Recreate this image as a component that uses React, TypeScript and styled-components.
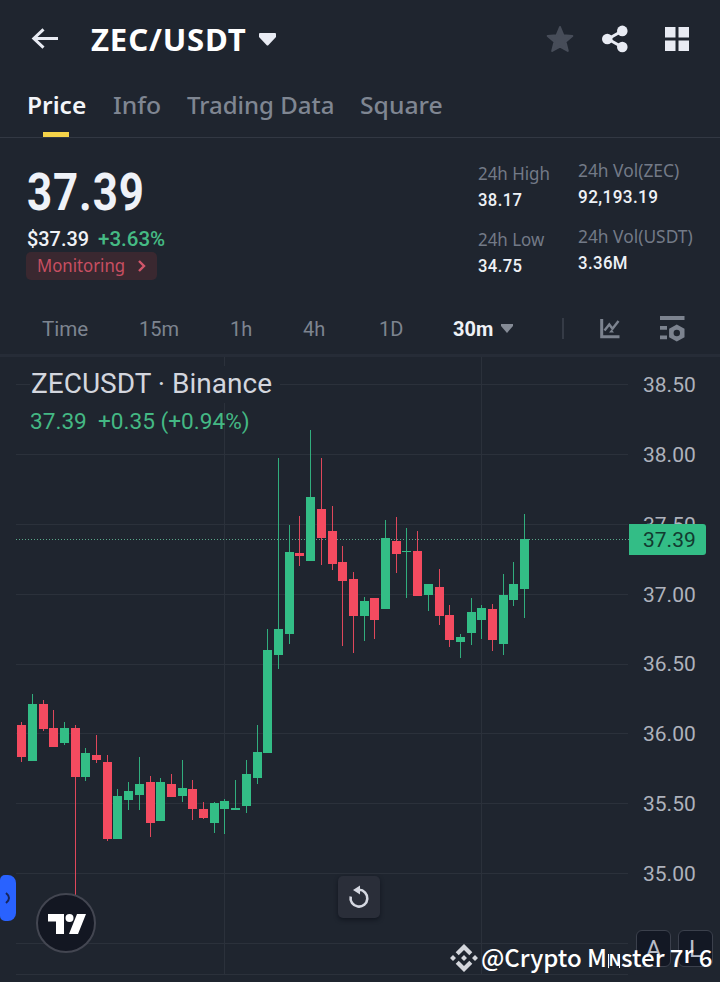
import React from "react";
import styled, { createGlobalStyle } from "styled-components";

const Global = createGlobalStyle`
  *, *::before, *::after { box-sizing: border-box; }
  html, body { margin: 0; background: #1f252f; }
  body { font-family: Roboto, "Noto Sans", sans-serif; color: #eaecef; overflow: hidden; }
`;

const UP = "#33bd86";
const DOWN = "#f44b60";

const Screen = styled.main`
  width: 720px;
  height: 982px;
  overflow: hidden;
  display: flex;
  flex-direction: column;
  background: #1f252f;
`;

const Squeeze = styled.span<{ $x: number; $gap?: number }>`
  display: inline-block;
  white-space: pre;
  letter-spacing: ${(p) => p.$gap ?? 0}px;
  transform: scaleX(${(p) => p.$x});
  transform-origin: left center;
`;

const Header = styled.header`
  height: 78px;
  flex: none;
  display: flex;
  align-items: center;
  padding: 0 31px 1px;

  svg { display: block; flex: none; }
`;

const PairButton = styled.button`
  all: unset;
  display: flex;
  align-items: center;
  width: 187px;
  height: 40px;
  margin-left: 32px;
  padding-top: 2px;
`;

const PairName = styled.span`
  width: 168px;
  font: 700 30px/40px "Noto Sans", sans-serif;
  color: #fff;
`;

const Actions = styled.div`
  margin-left: auto;
  display: flex;
  align-items: center;
`;

const IconSlot = styled.span<{ $w: number }>`
  width: ${(p) => p.$w}px;
  display: block;
`;

const Tabs = styled.nav`
  height: 60px;
  flex: none;
  display: flex;
  padding-left: 27px;
  border-bottom: 1px solid #323843;
`;

const Tab = styled.a<{ $w: number; $active?: boolean }>`
  width: ${(p) => p.$w}px;
  height: 59px;
  display: flex;
  flex-direction: column;
  justify-content: space-between;
  font: ${(p) => (p.$active ? 600 : 500)} 24px/54px "Noto Sans", sans-serif;
  color: ${(p) => (p.$active ? "#f3f5f9" : "#7f8692")};
  white-space: nowrap;
`;

const TabMark = styled.i`
  width: 26px;
  height: 5px;
  flex: none;
  margin-left: 16px;
  background: #f5d349;
`;

const Ticker = styled.section`
  height: 167px;
  flex: none;
  display: flex;
  padding: 19px 0 0 27px;
`;

const PriceBlock = styled.div`
  width: 451px;
  padding-top: 8px;
`;

const BigPrice = styled.div`
  height: 62px;
  font: 700 51px/56px Roboto, sans-serif;
  color: #eff2f8;
`;

const SubPrice = styled.div`
  display: flex;
  height: 25px;
  font: 500 20.5px/25px Roboto, sans-serif;
  color: #f0f2f6;
`;

const Usd = styled.span`
  width: 71px;
`;

const Change = styled.span`
  color: #45bb84;
`;

const Warning = styled.button`
  all: unset;
  display: flex;
  align-items: center;
  box-sizing: border-box;
  width: 131px;
  height: 28px;
  margin-left: -1px;
  padding-left: 11px;
  border-radius: 5px;
  background: #3a2830;
  color: #c84f62;
  font: 400 18px/26px "Noto Sans", sans-serif;
`;

const WarningText = styled.span`
  width: 101px;
  height: 28px;
`;

const Stats = styled.div<{ $w: number; $drop: number }>`
  width: ${(p) => p.$w}px;
  padding-top: ${(p) => p.$drop}px;
`;

const Stat = styled.div`
  height: 66px;
`;

const StatLabel = styled.div`
  height: 28px;
  font: 400 18px/26px "Noto Sans", sans-serif;
  color: #737a87;
`;

const StatValue = styled.div`
  font: 500 17.5px/24px Roboto, sans-serif;
  color: #eef1f6;
`;

const Intervals = styled.nav`
  height: 49px;
  flex: none;
  display: flex;
  align-items: center;
  padding: 0 0 2px 42px;

  svg { display: block; flex: none; }
`;

const Interval = styled.a<{ $w: number; $active?: boolean }>`
  width: ${(p) => p.$w}px;
  font: ${(p) => (p.$active ? 700 : 400)} 20px/28px Roboto, "Noto Sans", sans-serif;
  color: ${(p) => (p.$active ? "#eef1f6" : "#7d8490")};
`;

const Divider = styled.i`
  width: 2px;
  height: 21px;
  margin: 0 36px 0 49px;
  background: #353b46;
`;

const ChartArea = styled.section`
  position: relative;
  height: 628px;
  flex: none;
  display: grid;
  grid-template-columns: 629px 91px;
  border-top: 3px solid #262c37;

  > svg { display: block; }
`;

const Axis = styled.div`
  display: flex;
  flex-direction: column;
  padding: 15px 0 0 14px;
  font: 400 21px/26px Roboto, sans-serif;
  color: #aeb2bc;
`;

const Tick = styled.span`
  height: 69.86px;
  flex: none;
`;

const LastPrice = styled.div`
  position: absolute;
  left: 629px;
  top: 167px;
  width: 77px;
  height: 31px;
  padding-left: 14px;
  border-radius: 0 3px 3px 0;
  background: ${UP};
  color: #123a30;
  font: 400 21px/32px Roboto, sans-serif;
`;

const Legend = styled.div`
  position: absolute;
  left: 30px;
  top: 9px;
`;

const LegendTitle = styled.div`
  height: 37px;
  padding: 0 8px 0 1px;
  background: #1f252f;
  font: 400 28px/36px Roboto, sans-serif;
  color: #d3d6de;
`;

const LegendValues = styled.div`
  font: 400 22.500px/36px Roboto, sans-serif;
  color: #44b884;
`;

const ResetButton = styled.button`
  all: unset;
  position: absolute;
  left: 338px;
  top: 519px;
  width: 42px;
  height: 42px;
  display: grid;
  place-items: center;
  border-radius: 5px;
  background: #2a2e39;
  box-shadow: 0 2px 4px rgba(8, 11, 20, 0.55);
`;

const Drawer = styled.button`
  all: unset;
  position: absolute;
  left: 0;
  top: 518px;
  width: 16px;
  height: 46px;
  display: grid;
  place-items: center;
  border-radius: 5px 8px 8px 5px;
  background: #2962ff;
`;

const Badge = styled.div`
  position: absolute;
  left: 36px;
  top: 536px;
  width: 60px;
  height: 60px;
  display: grid;
  place-items: center;
  padding: 2px 0 0 1px;
  border: 2px solid #434651;
  border-radius: 50%;
  background: #131722;
`;

const ScaleButtons = styled.div`
  position: absolute;
  left: 636px;
  top: 573px;
  display: flex;
  gap: 7px;
`;

const ScaleButton = styled.button`
  all: unset;
  box-sizing: border-box;
  width: 35px;
  height: 37px;
  border: 1px solid #3b404c;
  border-radius: 6px;
  background: #131824;
  color: #b9bdc9;
  font: 400 24px/36px Roboto, sans-serif;
  text-align: center;
`;

const Watermark = styled.div`
  position: absolute;
  left: 450px;
  top: 583px;
  height: 36px;
  display: flex;
  align-items: center;
  color: #fff;
  white-space: pre;
  font: 500 24px/36px "Noto Sans CJK SC", sans-serif;
`;

const Handle = styled.span`
  height: 36px;
  margin: -2px 0 0 3px;
`;

const BoxedLetter = styled.span`
  position: relative;
  top: -1px;
  display: inline-block;
  width: 12px;
  height: 14px;
  margin: 0 1px;
  border: solid #fff;
  border-width: 0 1px;
  font: 700 16px/14px "Liberation Sans", sans-serif;
  text-align: center;
`;

const Raised = styled.span`
  position: relative;
  top: -4px;
`;

type Candle = [x: number, open: number, close: number, high: number, low: number, up: 0 | 1];

const candles: Candle[] = [
  [21, 725, 757, 722, 762, 0],
  [32, 704, 761, 694, 761, 1],
  [43, 704, 729, 700, 731, 0],
  [53, 728, 747, 710, 747, 0],
  [64, 728, 743, 722, 745, 1],
  [75, 728, 777, 725, 896, 0],
  [85, 753, 777, 748, 781, 1],
  [96, 755, 760, 735, 763, 0],
  [107, 762, 839, 755, 841, 0],
  [117, 796, 839, 789, 839, 1],
  [128, 791, 800, 782, 810, 1],
  [139, 784, 795, 757, 810, 1],
  [150, 782, 823, 776, 837, 0],
  [160, 782, 821, 778, 821, 1],
  [171, 784, 797, 774, 797, 0],
  [182, 788, 796, 760, 802, 1],
  [192, 789, 809, 780, 820, 0],
  [203, 809, 818, 802, 819, 0],
  [214, 803, 823, 802, 833, 1],
  [224, 801, 809, 799, 834, 1],
  [235, 808, 810, 780, 810, 1],
  [246, 774, 806, 760, 813, 1],
  [257, 752, 778, 725, 784, 1],
  [267, 650, 753, 629, 753, 1],
  [278, 629, 655, 458, 669, 1],
  [289, 552, 634, 525, 644, 1],
  [299, 553, 556, 516, 566, 0],
  [310, 497, 561, 430, 561, 1],
  [321, 509, 538, 458, 565, 0],
  [332, 531, 564, 506, 570, 0],
  [342, 562, 581, 546, 646, 0],
  [353, 579, 616, 572, 653, 0],
  [364, 601, 616, 597, 641, 1],
  [374, 598, 620, 598, 639, 0],
  [385, 538, 609, 520, 609, 1],
  [396, 541, 554, 517, 573, 0],
  [406, 551, 552, 528, 598, 1],
  [417, 551, 596, 531, 596, 0],
  [428, 584, 595, 584, 611, 1],
  [439, 587, 616, 569, 625, 0],
  [449, 615, 640, 605, 647, 0],
  [460, 637, 642, 634, 658, 1],
  [471, 612, 633, 598, 645, 1],
  [481, 608, 620, 605, 639, 1],
  [492, 609, 640, 604, 651, 0],
  [503, 595, 644, 574, 655, 1],
  [513, 584, 600, 562, 606, 1],
  [524, 539, 589, 514, 618, 1],
];

const rows = [384, 454, 524, 594, 664, 733, 803, 873, 943, 974];
const ticks = ["38.50", "38.00", "37.50", "37.00", "36.50", "36.00", "35.50", "35.00"];

const Candles = () => (
  <svg width="629" height="625" viewBox="0 357 629 625" shapeRendering="crispEdges">
    {rows.map((y) => (
      <rect key={y} x={16} y={y} width={612} height={1} fill="#2b313b" />
    ))}
    <rect x={224} y={357} width={1} height={618} fill="#2b313b" />
    <rect x={481} y={357} width={1} height={618} fill="#2b313b" />
    <path d="M16 539.5H629" stroke="#5aa88b" strokeDasharray="1 2" />
    {candles.map(([x, top, bottom, high, low, up]) => (
      <g key={x} fill={up ? UP : DOWN}>
        <rect x={x} y={high} width={1} height={low - high} opacity={0.9} />
        <rect x={x - 4} y={top} width={9} height={bottom - top} />
      </g>
    ))}
  </svg>
);

const BackIcon = () => (
  <svg width="28" height="22" viewBox="0 0 28 22" fill="none" stroke="#e8ebf3" strokeWidth="3">
    <path d="M27 10.500H2.500M12.500 1.300L2.800 10.500l9.700 9.200" />
  </svg>
);

const StarIcon = () => (
  <svg width="28" height="28" viewBox="0 0 28 28" fill="#474d59" stroke="#474d59" strokeWidth="2" strokeLinejoin="round">
    <path d="M14 2l3.300 8.200 9 .7-6.800 5.800 2.300 9.200-7.800-4.300-7.800 4.300 2.300-9.200L1.700 10.900l9-.7z" />
  </svg>
);

const ShareIcon = () => (
  <svg width="27" height="28" viewBox="0 0 27 28" fill="#e8ebf3">
    <path d="M21 6L7 14l14 8" fill="none" stroke="#e8ebf3" strokeWidth="3" />
    <circle cx="21.300" cy="5.900" r="5.300" />
    <circle cx="6.300" cy="14" r="5.300" />
    <circle cx="21.300" cy="22" r="5.300" />
  </svg>
);

const GridIcon = () => (
  <svg width="24" height="24" viewBox="0 0 24 24" fill="#e8ebf3">
    <path d="M0 0h10.500v10.500H0zM13.500 0H24v10.500H13.500zM0 13.500h10.500V24H0zM13.500 13.500H24V24H13.500z" />
  </svg>
);

const TrendIcon = () => (
  <svg width="20" height="20" viewBox="0 0 20 20" fill="none" stroke="#7c838f">
    <path d="M1.700 0v17.800H19.500" strokeWidth="3" />
    <path d="M4.500 11.500l4.800-6 3.200 4.200L18.500 2" strokeWidth="2.400" />
    <path d="M9 13.500l2.500-3 2.500 3z" fill="#7c838f" stroke="none" />
  </svg>
);

const SettingsIcon = () => (
  <svg width="25" height="26" viewBox="0 0 25 26" fill="#7c838f">
    <path d="M0 0h24.500v4H0zM0 10h7v3.800H0zM0 19.500h7v3.800H0z" />
    <path fillRule="evenodd" d="M16.800 8.500l7.700 4.300v8.400l-7.700 4.300-7.700-4.300v-8.400zM16.800 13.800a3.200 3.200 0 1 0 0 6.400 3.200 3.200 0 0 0 0-6.400z" />
  </svg>
);

const ResetIcon = () => (
  <svg width="22" height="24" viewBox="0 0 22 24">
    <path d="M2.700 11.500A8.400 8.400 0 1 0 11 4.800" fill="none" stroke="#d5d8e1" strokeWidth="2.600" />
    <path d="M5 5L12 .5V9.500z" fill="#d5d8e1" />
  </svg>
);

const ChartLogo = () => (
  <svg width="38" height="20" viewBox="0 0 38 20" fill="#fff">
    <path d="M0 0h16v20H8V7.500H0zM29 0h9l-8 20h-9z" />
    <circle cx="21.500" cy="4" r="4" />
  </svg>
);

const ExchangeLogo = () => (
  <svg width="28" height="28" viewBox="0 0 28 28" fill="#d4d6dc">
    <path d="M14 0l8.300 8.300-3 3L14 6l-5.300 5.300-3-3zM14 28l8.300-8.300-3-3L14 22l-5.300-5.300-3 3zM14 11l3 3-3 3-3-3zM3 11l3 3-3 3-3-3zM25 11l3 3-3 3-3-3z" />
  </svg>
);

export default function App() {
  return (
    <Screen>
      <Global />
      <Header>
        <BackIcon />
        <PairButton>
          <PairName><Squeeze $x={1.038} $gap={0.8}>ZEC/USDT</Squeeze></PairName>
          <svg width="18" height="14" viewBox="0 0 18 14" fill="#e8ebf3"><path d="M1 0h15q1 0 1 1v3L9.500 12q-1 1-2 0L0 4V1q0-1 1-1z" /></svg>
        </PairButton>
        <Actions>
          <IconSlot $w={55}><StarIcon /></IconSlot>
          <IconSlot $w={64}><ShareIcon /></IconSlot>
          <GridIcon />
        </Actions>
      </Header>
      <Tabs>
        <Tab $w={86} $active><Squeeze $x={1.02}>Price</Squeeze><TabMark /></Tab>
        <Tab $w={74}><Squeeze $x={1.03}>Info</Squeeze></Tab>
        <Tab $w={173}><Squeeze $x={1}>Trading Data</Squeeze></Tab>
        <Tab $w={90}><Squeeze $x={1.03}>Square</Squeeze></Tab>
      </Tabs>
      <Ticker>
        <PriceBlock>
          <BigPrice><Squeeze $x={0.86} $gap={1}>37.39</Squeeze></BigPrice>
          <SubPrice>
            <Usd><Squeeze $x={0.97}>$37.39</Squeeze></Usd>
            <Change><Squeeze $x={1}>+3.63%</Squeeze></Change>
          </SubPrice>
          <Warning>
            <WarningText><Squeeze $x={0.93}>Monitoring</Squeeze></WarningText>
            <svg width="8" height="12" viewBox="0 0 8 12" fill="none" stroke="#d2566a" strokeWidth="2.400"><path d="M1 1l5 5-5 5" /></svg>
          </Warning>
        </PriceBlock>
        <Stats $w={100} $drop={3}>
          <Stat>
            <StatLabel><Squeeze $x={0.94}>24h High</Squeeze></StatLabel>
            <StatValue><Squeeze $x={0.95} $gap={0.4}>38.17</Squeeze></StatValue>
          </Stat>
          <Stat>
            <StatLabel><Squeeze $x={0.94}>24h Low</Squeeze></StatLabel>
            <StatValue><Squeeze $x={0.95} $gap={0.4}>34.75</Squeeze></StatValue>
          </Stat>
        </Stats>
        <Stats $w={142} $drop={0}>
          <Stat>
            <StatLabel><Squeeze $x={0.965}>24h Vol(ZEC)</Squeeze></StatLabel>
            <StatValue><Squeeze $x={0.98} $gap={0.4}>92,193.19</Squeeze></StatValue>
          </Stat>
          <Stat>
            <StatLabel><Squeeze $x={0.965}>24h Vol(USDT)</Squeeze></StatLabel>
            <StatValue><Squeeze $x={0.96} $gap={0.4}>3.36M</Squeeze></StatValue>
          </Stat>
        </Stats>
      </Ticker>
      <Intervals>
        <Interval $w={97}><Squeeze $x={1.03}>Time</Squeeze></Interval>
        <Interval $w={91}>15m</Interval>
        <Interval $w={73}>1h</Interval>
        <Interval $w={76}>4h</Interval>
        <Interval $w={74}>1D</Interval>
        <Interval $w={48} $active>30m</Interval>
        <svg width="12" height="9" viewBox="0 0 12 9" fill="#858b96"><path d="M0 0h12v2L6 9 0 2z" /></svg>
        <Divider />
        <IconSlot $w={60}><TrendIcon /></IconSlot>
        <SettingsIcon />
      </Intervals>
      <ChartArea>
        <Candles />
        <Axis>
          {ticks.map((t) => <Tick key={t}>{t}</Tick>)}
        </Axis>
        <LastPrice>37.39</LastPrice>
        <Legend>
          <LegendTitle>ZECUSDT · Binance</LegendTitle>
          <LegendValues><Squeeze $x={1.005}>{"37.39  +0.35 (+0.94%)"}</Squeeze></LegendValues>
        </Legend>
        <ResetButton aria-label="Reset chart"><ResetIcon /></ResetButton>
        <Badge><ChartLogo /></Badge>
        <Drawer aria-label="Open drawing tools">
          <svg width="6" height="12" viewBox="0 0 6 12" fill="none" stroke="#17255c" strokeWidth="2"><path d="M1 1q6 5 0 10" /></svg>
        </Drawer>
        <ScaleButtons>
          <ScaleButton>A</ScaleButton>
          <ScaleButton>L</ScaleButton>
        </ScaleButtons>
        <Watermark>
          <ExchangeLogo />
          <Handle>@Crypto M<BoxedLetter>N</BoxedLetter>ster 7<Raised>r</Raised> 6</Handle>
        </Watermark>
      </ChartArea>
    </Screen>
  );
}
